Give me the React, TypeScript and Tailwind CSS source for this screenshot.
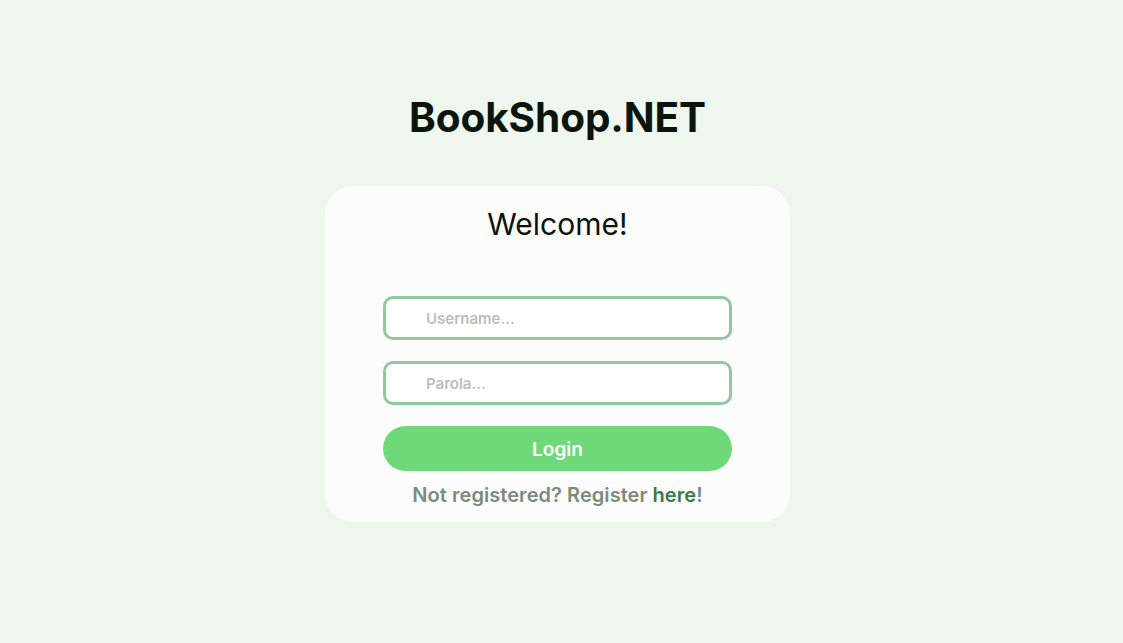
export default function App() {
  return (
    <div
      className="min-h-screen w-full bg-[#eff6ee] flex flex-col items-center pr-2 pt-[92px]"
      style={{ fontFamily: "Inter, 'Noto Sans', sans-serif" }}
    >
      <h1 className="text-[40.5px] leading-[52px] font-bold text-[#0b150b] tracking-[-0.1px]">BookShop.NET</h1>

      <div className="mt-[42px] w-[465px] bg-[#fcfcfc] rounded-[28px] px-[58px] pt-[14px] pb-[13px] flex flex-col items-center">
        <h2 className="text-[30px] leading-[48px] font-normal text-[#0b120b]">Welcome!</h2>

        <form className="w-full mt-[48px] flex flex-col" onSubmit={(e) => e.preventDefault()}>
          <input
            type="text"
            placeholder="Username..."
            className="w-full h-[44px] rounded-[10px] border-[3px] border-[#8fc9a0] bg-white pl-[40px] pr-3 text-[15px] font-semibold text-[#333] placeholder:text-[#bdbdbd] outline-none"
          />
          <input
            type="password"
            placeholder="Parola..."
            className="w-full h-[44px] mt-[21px] rounded-[10px] border-[3px] border-[#8fc9a0] bg-white pl-[40px] pr-3 text-[15px] font-semibold text-[#333] placeholder:text-[#bdbdbd] outline-none"
          />
          <button
            type="submit"
            className="w-full h-[45px] mt-[21px] pt-[3px] rounded-full bg-[#6fd97a] text-white text-[19px] font-semibold"
          >
            Login
          </button>
        </form>

        <p className="mt-[10px] text-[20px] leading-[28px] font-semibold tracking-[0.05px] text-[#7b8c7b]">
          Not registered? Register <a href="#" className="text-[#3b7a4b]">here</a>!
        </p>
      </div>
    </div>
  );
}
